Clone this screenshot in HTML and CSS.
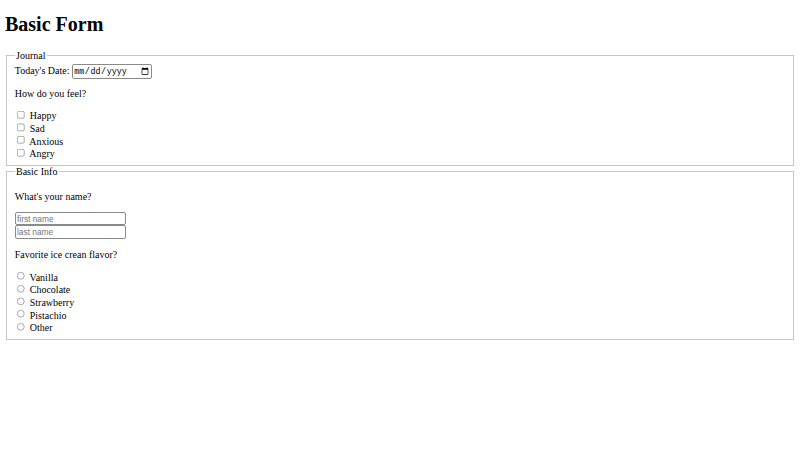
FILE: index.html
```html
<!DOCTYPE html>
<html>
<head>
<meta charset="utf-8">
<title>Basic Form</title>
<link rel="stylesheet" href="styles.css">
</head>
<body>
<h1 class="title">Basic Form</h1>
<form>
<fieldset class="group">
<legend>Journal</legend>
<label>Today's Date: <input class="date" type="date"></label>
<p class="question tight">How do you feel?</p>
<input class="choice" type="checkbox"> Happy<br>
<input class="choice" type="checkbox"> Sad<br>
<input class="choice" type="checkbox"> Anxious<br>
<input class="choice" type="checkbox"> Angry
</fieldset>
<fieldset class="group">
<legend>Basic Info</legend>
<p class="question name">What's your name?</p>
<input class="field" type="text" placeholder="first name"><br>
<input class="field" type="text" placeholder="last name">
<p class="question">Favorite ice crean flavor?</p>
<input class="choice" type="radio" name="flavor"> Vanilla<br>
<input class="choice" type="radio" name="flavor"> Chocolate<br>
<input class="choice" type="radio" name="flavor"> Strawberry<br>
<input class="choice" type="radio" name="flavor"> Pistachio<br>
<input class="choice" type="radio" name="flavor"> Other
</fieldset>
</form>
</body>
</html>
```
FILE: styles.css
```css
html {
  zoom: 0.625;
}
body {
  font-family: "Liberation Serif", "Times New Roman", serif;
  color: #000;
}
.title {
  margin-top: 13.5px;
}
.group {
  border: 3px solid #c6c6c6;
}
.question {
  margin: 16px 0;
}
.question.tight {
  margin-top: 15px;
  margin-bottom: 14.5px;
}
.question.name {
  margin-bottom: 17px;
}
.field {
  font-family: "Liberation Sans", Arial, sans-serif;
  font-size: 13.33px;
  width: 171px;
  border: 1.6px solid #8a8a8a;
  border-radius: 3.2px;
  padding: 1px 2px;
}
.date {
  font-family: "Liberation Mono", "DejaVu Sans Mono", monospace;
  font-size: 13.33px;
  border: 1.6px solid #8a8a8a;
  border-radius: 3.2px;
  padding: 1px 1px;
}
.choice {
  margin: 4px 3px 3px 4px;
}
```
